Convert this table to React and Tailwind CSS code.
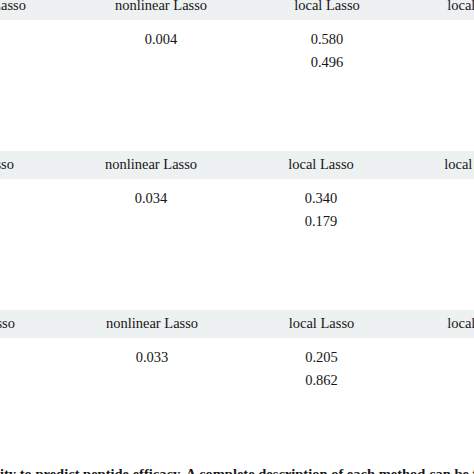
const sections = [
  {
    c0: "w-[84px] pr-[58px]",
    c1: "w-[154px]",
    c2: "w-[178px]",
    c3: "w-[128px]",
    first: "0.004",
    local: ["0.580", "0.496"],
  },
  {
    c0: "w-[76px] pr-[62px]",
    c1: "w-[150px]",
    c2: "w-[190px]",
    c3: "w-[122px]",
    first: "0.034",
    local: ["0.340", "0.179"],
  },
  {
    c0: "w-[78px] pr-[63px]",
    c1: "w-[148px]",
    c2: "w-[191px]",
    c3: "w-[126px]",
    first: "0.033",
    local: ["0.205", "0.862"],
  },
];

export default function App() {
  return (
    <div className="w-[474px] h-[474px] overflow-hidden bg-white text-[#161616] font-['Liberation_Serif',_'DejaVu_Serif',_serif]">
      <div className="-mt-[8px] flex flex-col gap-[77px]">
        {sections.map((s, i) => (
          <Section key={i} {...s} />
        ))}
      </div>

      {/* ===== CAPTION ===== */}
      <p className="mt-[72px] whitespace-nowrap text-[14.5px] font-bold leading-[20px]">
        ity to predict peptide efficacy. A complete description of each method can be
        found in the Methods section.
      </p>
    </div>
  );
}

function Section({ c0, c1, c2, c3, first, local }) {
  return (
    <div className="text-[14.5px] whitespace-nowrap">
      <div className="flex h-[28px] items-center bg-[#eef1f2]">
        <div className={`flex shrink-0 justify-end ${c0}`}>
          <span className="shrink-0">Lasso</span>
        </div>
        <div className={`shrink-0 text-center ${c1}`}>nonlinear Lasso</div>
        <div className={`shrink-0 text-center ${c2}`}>local Lasso</div>
        <div className={`shrink-0 text-center ${c3}`}>local Lasso</div>
      </div>

      <div className="flex pt-[8px]">
        <div className={`shrink-0 ${c0}`} />
        <div className={`shrink-0 text-center ${c1}`}>
          <div className="h-[23px] leading-[23px]">{first}</div>
        </div>
        <div className={`shrink-0 text-center ${c2}`}>
          {local.map((v) => (
            <div key={v} className="h-[23px] leading-[23px]">
              {v}
            </div>
          ))}
        </div>
      </div>
    </div>
  );
}
